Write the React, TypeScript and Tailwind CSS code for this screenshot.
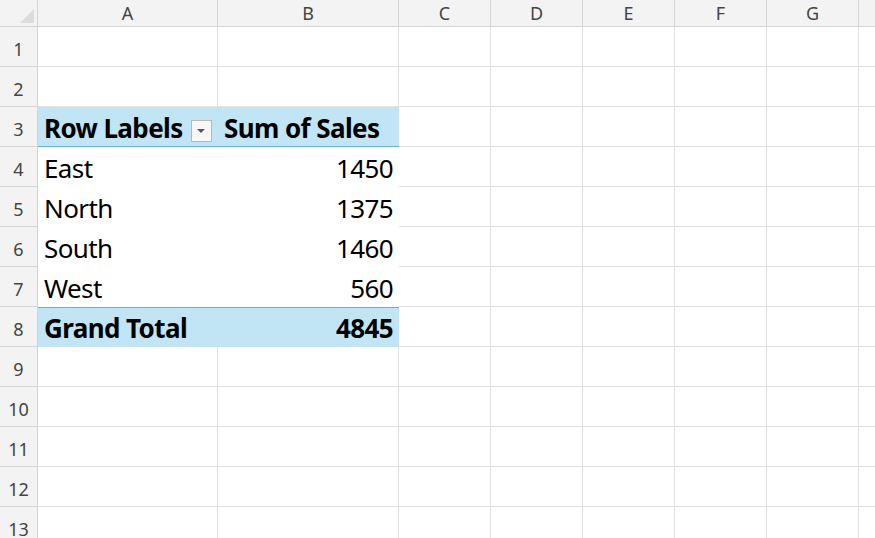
const cols = ["A", "B", "C", "D", "E", "F", "G", ""];

type Cell = { text?: string; bold?: boolean; right?: boolean; filter?: boolean };

const pivot: Record<number, [Cell, Cell]> = {
  3: [{ text: "Row Labels", bold: true, filter: true }, { text: "Sum of Sales", bold: true }],
  4: [{ text: "East" }, { text: "1450", right: true }],
  5: [{ text: "North" }, { text: "1375", right: true }],
  6: [{ text: "South" }, { text: "1460", right: true }],
  7: [{ text: "West" }, { text: "560", right: true }],
  8: [{ text: "Grand Total", bold: true }, { text: "4845", bold: true, right: true }],
};

export default function App() {
  const rows = Array.from({ length: 13 }, (_, i) => i + 1);
  return (
    <div
      className="w-[875px] h-[538px] overflow-hidden bg-white"
      style={{ fontFamily: '"Noto Sans", "Open Sans", sans-serif' }}
    >
      <div className="grid grid-cols-[38px_180px_181px_92px_92px_92px_92px_92px_92px] grid-rows-[27px_repeat(13,40px)]">
        <div className="bg-[#f3f3f3] border-r border-b border-[#d4d4d4] relative">
          <div className="absolute right-[3px] bottom-[3px] w-0 h-0 border-l-[14px] border-l-transparent border-b-[14px] border-b-[#dcdcdc]" />
        </div>
        {cols.map((c, i) => (
          <div
            key={i}
            className="bg-[#f3f3f3] border-r border-b border-[#d4d4d4] flex items-center justify-center text-[18px] text-[#444]"
          >
            {c}
          </div>
        ))}
        {rows.map((r) => {
          const p = pivot[r];
          return [
            <div
              key={`h${r}`}
              className="bg-[#f3f3f3] border-r border-b border-[#d4d4d4] flex items-end justify-center pb-[3px] text-[18px] text-[#444]"
            >
              {r}
            </div>,
            ...cols.map((_, ci) => {
              const cell = p && ci < 2 ? p[ci] : undefined;
              if (p && ci < 2) {
                const top = r === 8 ? "border-t border-t-[#5fb4dc]" : "";
                const bottom = r === 3 ? "border-b border-b-[#5fb4dc]" : "border-b border-b-transparent";
                const bg = r === 3 || r === 8 ? "bg-[#c1e5f5]" : "bg-white";
                return (
                  <div
                    key={`${r}-${ci}`}
                    className={`${bg} ${top} ${bottom} flex items-end pb-[1px] px-[6px] text-[26px] leading-[34px] text-black whitespace-nowrap ${cell?.right ? "justify-end" : ""} ${cell?.bold ? "font-bold" : ""}`}
                  >
                    <span className="tracking-[-0.6px]">{cell?.text}</span>
                    {cell?.filter && (
                      <span className="ml-[8px] mb-[3px] w-[22px] h-[22px] border border-[#b8b8b8] bg-[#f7f7f7] flex items-center justify-center">
                        <span className="w-0 h-0 border-l-[4px] border-r-[4px] border-t-[4px] border-l-transparent border-r-transparent border-t-[#555]" />
                      </span>
                    )}
                  </div>
                );
              }
              return (
                <div key={`${r}-${ci}`} className="border-r border-b border-[#e1e1e1]" />
              );
            }),
          ];
        })}
      </div>
    </div>
  );
}
